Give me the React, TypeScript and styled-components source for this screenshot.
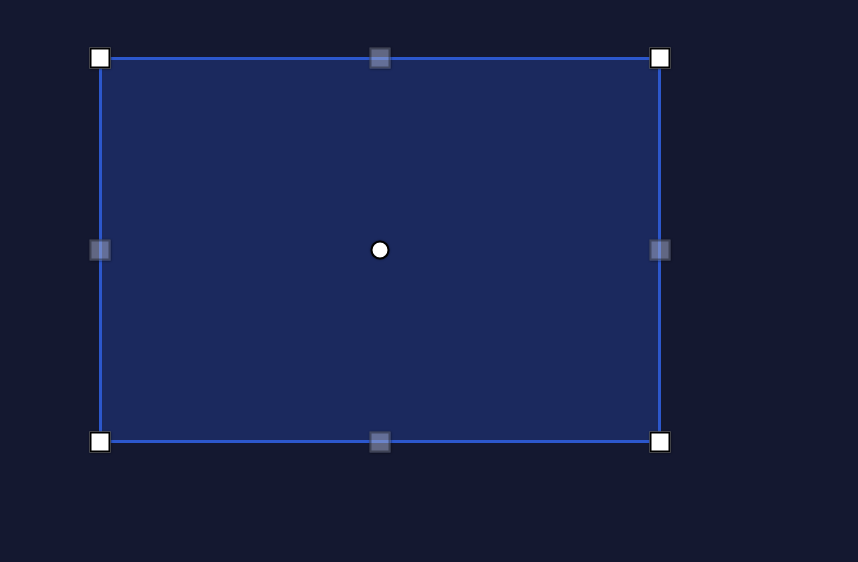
import React from 'react'
import styled, { createGlobalStyle } from 'styled-components'

const GlobalStyle = createGlobalStyle`
  html, body {
    margin: 0;
    padding: 0;
    background: #141830;
    font-family: "Inter", "Liberation Sans", sans-serif;
  }
`

const Canvas = styled.div`
  width: 858px;
  height: 562px;
  background: #141830;
  padding: 58px 0 0 100px;
  box-sizing: border-box;
  overflow: hidden;
`

const Selection = styled.div`
  position: relative;
  width: 560px;
  height: 384px;
  background: #1b295e;
  box-shadow: 0 0 0 1px #2c57cc, inset 0 0 0 2px #2c57cc;
`

type Pos = { x: number; y: number }

const Handle = styled.div<{ $corner?: boolean; $x: number; $y: number }>`
  position: absolute;
  left: ${(p) => p.$x * 100}%;
  top: ${(p) => p.$y * 100}%;
  width: 17px;
  height: 17px;
  transform: translate(-50%, -50%);
  background: ${(p) => (p.$corner ? '#ffffff' : 'rgba(160, 170, 200, 0.55)')};
  border: 2px solid ${(p) => (p.$corner ? '#000000' : 'rgba(0, 0, 0, 0.35)')};
  box-shadow: 0 0 2px rgba(0, 0, 0, 0.6);
`

const Pivot = styled.div`
  position: absolute;
  left: 50%;
  top: 50%;
  width: 15px;
  height: 15px;
  transform: translate(-50%, -50%);
  background: #ffffff;
  border: 2px solid #000000;
  border-radius: 50%;
  box-shadow: 0 0 2px rgba(0, 0, 0, 0.6);
`

const corners: Pos[] = [
  { x: 0, y: 0 },
  { x: 1, y: 0 },
  { x: 0, y: 1 },
  { x: 1, y: 1 },
]

const edges: Pos[] = [
  { x: 0.5, y: 0 },
  { x: 0, y: 0.5 },
  { x: 1, y: 0.5 },
  { x: 0.5, y: 1 },
]

const App: React.FC = () => {
  return (
    <>
      <GlobalStyle />
      <Canvas>
        <Selection>
          {edges.map((p) => (
            <Handle key={`e${p.x}-${p.y}`} $x={p.x} $y={p.y} />
          ))}
          {corners.map((p) => (
            <Handle key={`c${p.x}-${p.y}`} $corner $x={p.x} $y={p.y} />
          ))}
          <Pivot />
        </Selection>
      </Canvas>
    </>
  )
}

export default App
